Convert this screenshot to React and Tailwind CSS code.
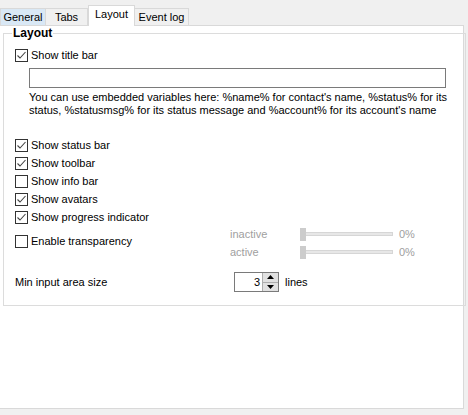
import React from 'react';

function Check({ checked, label, className = '' }) {
    return (
        <label className={`flex items-center h-[18px] ${className}`}>
            <span className="w-[13px] h-[13px] border border-[#333] bg-white flex items-center justify-center shrink-0">
                {checked && (
                    <svg width="11" height="11" viewBox="0 0 11 11" fill="none">
                        <path d="M1.5 5.5 L4 8 L9.5 2" stroke="#444" strokeWidth="1.1" />
                    </svg>
                )}
            </span>
            <span className="ml-[3px]">{label}</span>
        </label>
    );
}

function Slider({ label }) {
    return (
        <div className="flex items-center h-[18px] text-[#a0a0a0]">
            <span className="w-[70px]">{label}</span>
            <div className="relative w-[93px] h-[13px] flex items-center">
                <div className="w-full h-[4px] bg-[#e7e7e7] border border-[#d6d6d6]" />
                <div className="absolute left-0 top-0 w-[6px] h-[13px] bg-[#cccccc]" />
            </div>
            <span className="ml-[6px]">0%</span>
        </div>
    );
}

export default function App() {
    return (
        <div className="w-[468px] h-[415px] bg-[#f0f0f0] text-[11px] text-black overflow-hidden" style={{ fontFamily: '"Liberation Sans", Arial, sans-serif' }}>
            {/* tab strip */}
            <div className="flex items-end h-[25px]">
                <div className="w-[46px] h-[17px] flex items-center justify-center bg-[#d9e8f5] border border-[#d9d9d9] border-b-0">General</div>
                <div className="w-[42px] h-[17px] flex items-center justify-center bg-[#f0f0f0] border border-[#d9d9d9] border-l-0 border-b-0">Tabs</div>
                <div className="w-[47px] h-[21px] pb-[3px] flex items-center justify-center bg-white border border-[#d9d9d9] border-b-0 relative top-[1px] z-10">Layout</div>
                <div className="w-[54px] h-[17px] flex items-center justify-center bg-[#f0f0f0] border border-[#d9d9d9] border-l-0 border-b-0">Event log</div>
            </div>
            {/* tab pane */}
            <div className="w-[464px] h-[384px] bg-white border border-l-0 border-[#d9d9d9] pt-[1px] pl-[3px]">
                <fieldset className="w-[456px] h-[279px] border border-[#dcdcdc] px-[11px] pt-[2px] m-0">
                    <legend className="font-bold px-[1px] ml-[-3px] leading-[12px] text-[12px]">Layout</legend>
                    <Check checked label="Show title bar" className="mt-[5px]" />
                    <div className="ml-[14px] mt-[4px] w-[417px] h-[20px] border border-[#7a7a7a] bg-white" />
                    <p className="ml-[14px] mt-[3px] leading-[13px] w-[425px]">
                        You can use embedded variables here: %name% for contact's name, %status% for its status, %statusmsg% for its status message and %account% for its account's name
                    </p>
                    <div className="mt-[19px]">
                        <Check checked label="Show status bar" />
                        <Check checked label="Show toolbar" />
                        <Check label="Show info bar" />
                        <Check checked label="Show avatars" />
                        <Check checked label="Show progress indicator" />
                    </div>
                    <div className="flex items-start mt-[-1px]">
                        <Check label="Enable transparency" className="mt-[7px] w-[215px]" />
                        <div>
                            <Slider label="inactive" />
                            <Slider label="active" />
                        </div>
                    </div>
                    <div className="flex items-center mt-[11px]">
                        <span className="w-[219px]">Min input area size</span>
                        <div className="flex h-[20px] border border-[#7a7a7a] bg-white">
                            <div className="w-[27px] text-right pr-[2px] leading-[18px]">3</div>
                            <div className="w-[16px] flex flex-col border-l border-[#adadad] bg-[#e1e1e1]">
                                <div className="flex-1 flex items-center justify-center border-b border-[#adadad]">
                                    <svg width="7" height="4" viewBox="0 0 7 4"><path d="M0 4 L3.5 0 L7 4 Z" fill="#000" /></svg>
                                </div>
                                <div className="flex-1 flex items-center justify-center">
                                    <svg width="7" height="4" viewBox="0 0 7 4"><path d="M0 0 L3.5 4 L7 0 Z" fill="#000" /></svg>
                                </div>
                            </div>
                        </div>
                        <span className="ml-[6px]">lines</span>
                    </div>
                </fieldset>
            </div>
        </div>
    );
}
